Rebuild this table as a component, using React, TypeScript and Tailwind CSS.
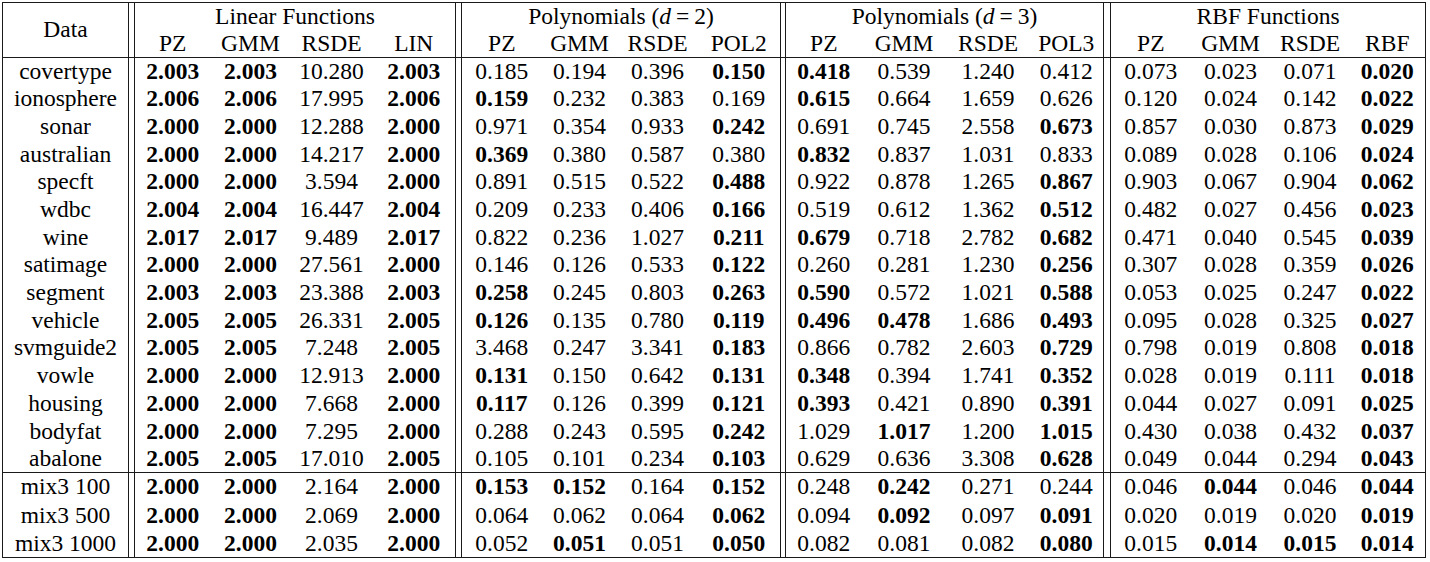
import React from "react";

type Row = { name: string; vals: string[] };

// values ending with "*" are printed in bold (best result in the group)
const rows: Row[] = [
  { name: "covertype", vals: ["2.003*", "2.003*", "10.280", "2.003*", "0.185", "0.194", "0.396", "0.150*", "0.418*", "0.539", "1.240", "0.412", "0.073", "0.023", "0.071", "0.020*"] },
  { name: "ionosphere", vals: ["2.006*", "2.006*", "17.995", "2.006*", "0.159*", "0.232", "0.383", "0.169", "0.615*", "0.664", "1.659", "0.626", "0.120", "0.024", "0.142", "0.022*"] },
  { name: "sonar", vals: ["2.000*", "2.000*", "12.288", "2.000*", "0.971", "0.354", "0.933", "0.242*", "0.691", "0.745", "2.558", "0.673*", "0.857", "0.030", "0.873", "0.029*"] },
  { name: "australian", vals: ["2.000*", "2.000*", "14.217", "2.000*", "0.369*", "0.380", "0.587", "0.380", "0.832*", "0.837", "1.031", "0.833", "0.089", "0.028", "0.106", "0.024*"] },
  { name: "specft", vals: ["2.000*", "2.000*", "3.594", "2.000*", "0.891", "0.515", "0.522", "0.488*", "0.922", "0.878", "1.265", "0.867*", "0.903", "0.067", "0.904", "0.062*"] },
  { name: "wdbc", vals: ["2.004*", "2.004*", "16.447", "2.004*", "0.209", "0.233", "0.406", "0.166*", "0.519", "0.612", "1.362", "0.512*", "0.482", "0.027", "0.456", "0.023*"] },
  { name: "wine", vals: ["2.017*", "2.017*", "9.489", "2.017*", "0.822", "0.236", "1.027", "0.211*", "0.679*", "0.718", "2.782", "0.682*", "0.471", "0.040", "0.545", "0.039*"] },
  { name: "satimage", vals: ["2.000*", "2.000*", "27.561", "2.000*", "0.146", "0.126", "0.533", "0.122*", "0.260", "0.281", "1.230", "0.256*", "0.307", "0.028", "0.359", "0.026*"] },
  { name: "segment", vals: ["2.003*", "2.003*", "23.388", "2.003*", "0.258*", "0.245", "0.803", "0.263*", "0.590*", "0.572", "1.021", "0.588*", "0.053", "0.025", "0.247", "0.022*"] },
  { name: "vehicle", vals: ["2.005*", "2.005*", "26.331", "2.005*", "0.126*", "0.135", "0.780", "0.119*", "0.496*", "0.478*", "1.686", "0.493*", "0.095", "0.028", "0.325", "0.027*"] },
  { name: "svmguide2", vals: ["2.005*", "2.005*", "7.248", "2.005*", "3.468", "0.247", "3.341", "0.183*", "0.866", "0.782", "2.603", "0.729*", "0.798", "0.019", "0.808", "0.018*"] },
  { name: "vowle", vals: ["2.000*", "2.000*", "12.913", "2.000*", "0.131*", "0.150", "0.642", "0.131*", "0.348*", "0.394", "1.741", "0.352*", "0.028", "0.019", "0.111", "0.018*"] },
  { name: "housing", vals: ["2.000*", "2.000*", "7.668", "2.000*", "0.117*", "0.126", "0.399", "0.121*", "0.393*", "0.421", "0.890", "0.391*", "0.044", "0.027", "0.091", "0.025*"] },
  { name: "bodyfat", vals: ["2.000*", "2.000*", "7.295", "2.000*", "0.288", "0.243", "0.595", "0.242*", "1.029", "1.017*", "1.200", "1.015*", "0.430", "0.038", "0.432", "0.037*"] },
  { name: "abalone", vals: ["2.005*", "2.005*", "17.010", "2.005*", "0.105", "0.101", "0.234", "0.103*", "0.629", "0.636", "3.308", "0.628*", "0.049", "0.044", "0.294", "0.043*"] },
];

const mixRows: Row[] = [
  { name: "mix3 100", vals: ["2.000*", "2.000*", "2.164", "2.000*", "0.153*", "0.152*", "0.164", "0.152*", "0.248", "0.242*", "0.271", "0.244", "0.046", "0.044*", "0.046", "0.044*"] },
  { name: "mix3 500", vals: ["2.000*", "2.000*", "2.069", "2.000*", "0.064", "0.062", "0.064", "0.062*", "0.094", "0.092*", "0.097", "0.091*", "0.020", "0.019", "0.020", "0.019*"] },
  { name: "mix3 1000", vals: ["2.000*", "2.000*", "2.035", "2.000*", "0.052", "0.051*", "0.051", "0.050*", "0.082", "0.081", "0.082", "0.080*", "0.015", "0.014*", "0.015*", "0.014*"] },
];

const subHeads = [
  ["PZ", "GMM", "RSDE", "LIN"],
  ["PZ", "GMM", "RSDE", "POL2"],
  ["PZ", "GMM", "RSDE", "POL3"],
  ["PZ", "GMM", "RSDE", "RBF"],
];

const line = "border-[#1a1a1a]";

function Gap({ span }: { span: number }) {
  return <td rowSpan={span} className={`border-x ${line} p-0`} />;
}

function Cell({ v }: { v: string }) {
  const bold = v.endsWith("*");
  return <td className={`p-0 text-center ${bold ? "font-bold" : ""}`}>{bold ? v.slice(0, -1) : v}</td>;
}

function BodyRow({ row, gaps, tall }: { row: Row; gaps: number; tall?: boolean }) {
  return (
    <tr className={tall ? "h-[28.3px]" : "h-[27.7px]"}>
      <td className="p-0 text-center">{row.name}</td>
      {gaps > 0 && <Gap span={gaps} />}
      {row.vals.slice(0, 4).map((v, i) => <Cell key={"a" + i} v={v} />)}
      {gaps > 0 && <Gap span={gaps} />}
      {row.vals.slice(4, 8).map((v, i) => <Cell key={"b" + i} v={v} />)}
      {gaps > 0 && <Gap span={gaps} />}
      {row.vals.slice(8, 12).map((v, i) => <Cell key={"c" + i} v={v} />)}
      {gaps > 0 && <Gap span={gaps} />}
      {row.vals.slice(12, 16).map((v, i) => <Cell key={"d" + i} v={v} />)}
    </tr>
  );
}

export default function App() {
  return (
    <div className="h-[562px] w-[1430px] overflow-hidden bg-white pl-[2px] pt-[2px] font-['Liberation_Serif','Times_New_Roman',serif] text-black">
      <table className={`w-[1423px] table-fixed border-collapse border ${line} whitespace-nowrap text-[23.5px] leading-none`}>
        <colgroup>
          <col className="w-[126px]" />
          <col className="w-[6px]" />
          <col className="w-[76px]" />
          <col className="w-[80px]" />
          <col className="w-[82px]" />
          <col className="w-[83px]" />
          <col className="w-[6px]" />
          <col className="w-[80px]" />
          <col className="w-[76px]" />
          <col className="w-[80px]" />
          <col className="w-[83px]" />
          <col className="w-[5px]" />
          <col className="w-[76px]" />
          <col className="w-[85px]" />
          <col className="w-[83px]" />
          <col className="w-[74px]" />
          <col className="w-[7px]" />
          <col className="w-[80px]" />
          <col className="w-[80px]" />
          <col className="w-[79px]" />
          <col className="w-[76px]" />
        </colgroup>
        <thead className={`border-b ${line}`}>
          <tr className="h-[27.5px]">
            <th rowSpan={2} className="p-0 text-center font-normal">Data</th>
            <Gap span={2} />
            <th colSpan={4} className="p-0 text-center font-normal">Linear Functions</th>
            <Gap span={2} />
            <th colSpan={4} className="p-0 text-center font-normal">
              Polynomials (<i>d</i>
              <span className="px-[5px]">=</span>2)
            </th>
            <Gap span={2} />
            <th colSpan={4} className="p-0 text-center font-normal">
              Polynomials (<i>d</i>
              <span className="px-[5px]">=</span>3)
            </th>
            <Gap span={2} />
            <th colSpan={4} className="p-0 text-center font-normal">RBF Functions</th>
          </tr>
          <tr className="h-[27.5px]">
            {subHeads.flat().map((h, i) => (
              <th key={i} className="p-0 text-center font-normal">{h}</th>
            ))}
          </tr>
        </thead>
        <tbody className={`border-b ${line}`}>
          {rows.map((r, i) => (
            <BodyRow key={r.name} row={r} gaps={i === 0 ? rows.length : 0} />
          ))}
        </tbody>
        <tbody>
          {mixRows.map((r, i) => (
            <BodyRow key={r.name} row={r} gaps={i === 0 ? mixRows.length : 0} tall />
          ))}
        </tbody>
      </table>
    </div>
  );
}
